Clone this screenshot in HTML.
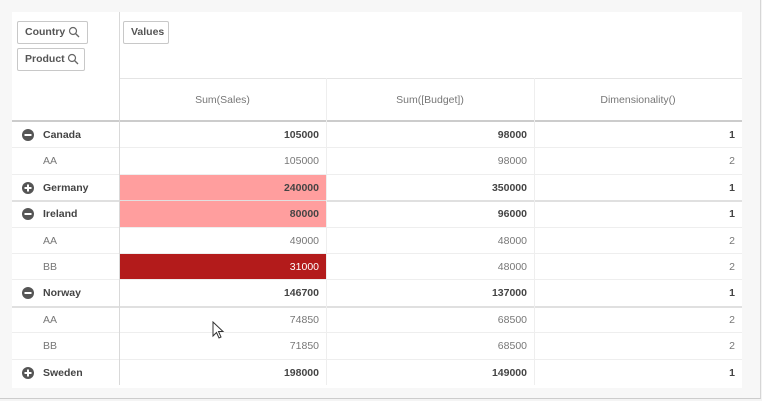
<!DOCTYPE html><html><head><style>
body{margin:0;width:762px;height:401px;background:#f4f4f4;font-family:"Liberation Sans",sans-serif;position:relative;overflow:hidden}
.frame{position:absolute;left:0;top:0;width:760px;height:398px;border-right:1px solid #d6d6d6;border-bottom:1px solid #ccc;background:#f7f7f7}
.panel{position:absolute;left:12px;top:12px;width:730px;height:376px;background:#fff}
.btn{position:absolute;height:23px;border:1px solid #c8c8c8;border-radius:2px;background:#fff;font-size:10.5px;font-weight:bold;color:#555;line-height:21px;padding:0 7px;box-sizing:border-box}
.v{position:absolute;background:#d9d9d9;width:1px}
.h{position:absolute;background:#eee;height:1px}
.cell{position:absolute;font-size:10.5px;line-height:26px;height:26px}
.r{text-align:right}
.b{font-weight:bold;color:#444}
.n{color:#777}
svg{position:absolute}
</style></head><body><div class="frame"></div>
<div class="panel"></div>
<div class="btn" style="left:17px;top:21px;width:71px">Country</div>
<div class="btn" style="left:17px;top:48px;width:68px">Product</div>
<div class="btn" style="left:123px;top:21px;width:46px">Values</div>
<svg style="left:68px;top:26px" width="12" height="12"><circle cx="5" cy="5" r="3.5" fill="none" stroke="#666" stroke-width="1.2"/><line x1="7.5" y1="7.5" x2="11" y2="11" stroke="#666" stroke-width="1.3"/></svg>
<svg style="left:67px;top:53px" width="12" height="12"><circle cx="5" cy="5" r="3.5" fill="none" stroke="#666" stroke-width="1.2"/><line x1="7.5" y1="7.5" x2="11" y2="11" stroke="#666" stroke-width="1.3"/></svg>
<div class="h" style="left:119px;top:78px;width:623px;background:#e4e4e4"></div>
<div class="h" style="left:12px;top:120px;width:730px;height:2px;background:#ccc"></div>
<div class="cell n" style="left:119px;top:87px;width:207px;text-align:center">Sum(Sales)</div>
<div class="cell n" style="left:326px;top:87px;width:208px;text-align:center">Sum([Budget])</div>
<div class="cell n" style="left:534px;top:87px;width:208px;text-align:center">Dimensionality()</div>
<div id="rows"></div>
<div class="v" style="left:119px;top:12px;height:373px"></div>
<div class="v" style="left:326px;top:78px;height:307px;background:#eee"></div>
<div class="v" style="left:534px;top:78px;height:307px;background:#eee"></div>
<svg style="left:212px;top:321px" width="14" height="20"><path d="M1 1 L1 15 L4.5 11.5 L7 17 L9 16 L6.5 10.5 L11 10.5 Z" fill="#fff" stroke="#333" stroke-width="1"/></svg>
<script>
var d=[["Canada",1,"105000","98000","1","-"],["AA",0,"105000","98000","2"],["Germany",1,"240000","350000","1","+","#ff9e9e"],["Ireland",1,"80000","96000","1","-","#ff9e9e"],["AA",0,"49000","48000","2"],["BB",0,"31000","48000","2","","#b31b1b"],["Norway",1,"146700","137000","1","-"],["AA",0,"74850","68500","2"],["BB",0,"71850","68500","2"],["Sweden",1,"198000","149000","1","+"]];
var h="",y=122;
d.forEach(function(r,i){var t=Math.round(y);var c=r[1]?"b":"n";
if(r[6])h+='<div style="position:absolute;left:120px;top:'+t+'px;width:206px;height:26px;background:'+r[6]+'"></div>';
var sc=(r[6]=="#b31b1b")?'color:#fff;font-weight:normal':'';
if(r[5]){h+='<svg style="left:22px;top:'+(t+7)+'px" width="12" height="12"><circle cx="6" cy="6" r="6" fill="#555"/><line x1="2.5" y1="6" x2="9.5" y2="6" stroke="#fff" stroke-width="2"/>'+(r[5]=="+"?'<line x1="6" y1="2.5" x2="6" y2="9.5" stroke="#fff" stroke-width="2"/>':'')+'</svg>';}
h+='<div class="cell '+c+'" style="left:43px;top:'+t+'px">'+r[0]+'</div>';
h+='<div class="cell r '+c+'" style="left:119px;top:'+t+'px;width:200px;'+sc+'">'+r[2]+'</div>';
h+='<div class="cell r '+c+'" style="left:326px;top:'+t+'px;width:201px">'+r[3]+'</div>';
h+='<div class="cell r '+c+'" style="left:534px;top:'+t+'px;width:201px">'+r[4]+'</div>';
y+=26.4;var bt=Math.round(y)-1;var thick=(i==2||i==6);
if(i<9)h+='<div class="h" style="left:12px;top:'+bt+'px;width:730px;'+(thick?'height:2px;background:#e0e0e0':'')+'"></div>';
});
document.getElementById("rows").innerHTML=h;
</script>
</body></html>
